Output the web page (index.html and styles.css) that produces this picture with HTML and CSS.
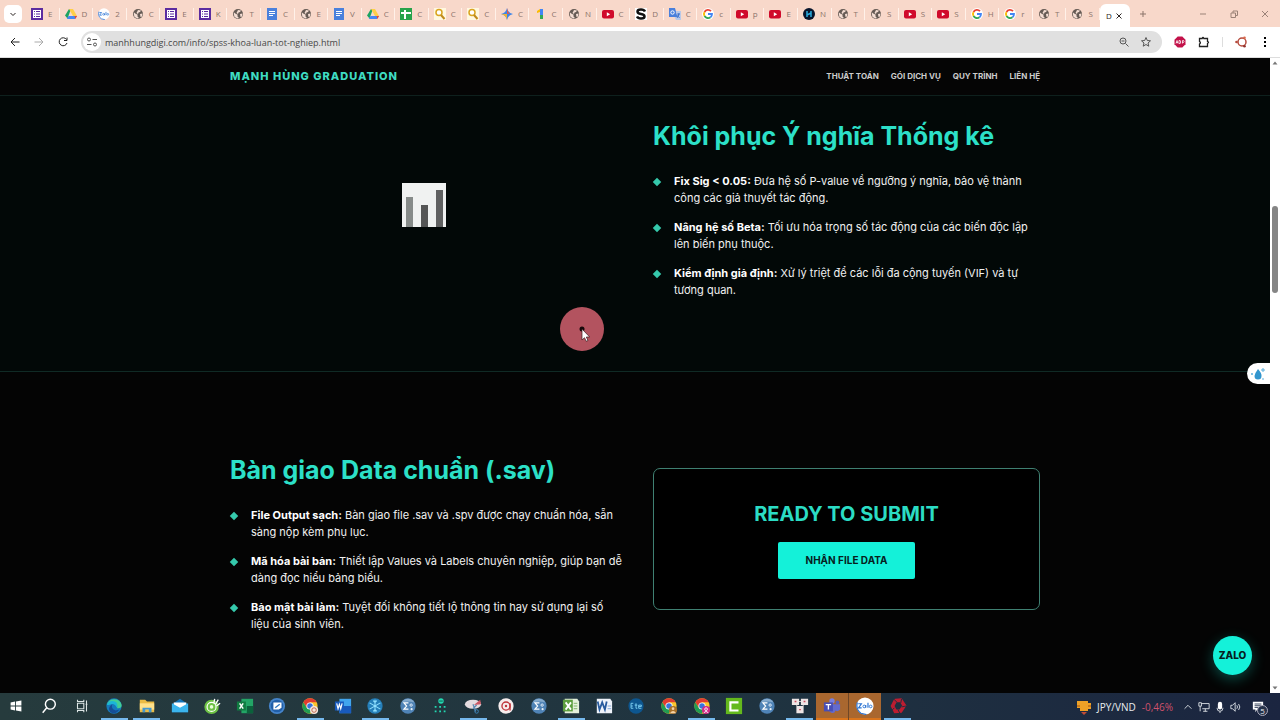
FILE: index.html
```html
<!DOCTYPE html>
<html lang="vi">
<head>
  <meta charset="UTF-8">
  <meta name="viewport" content="width=device-width, initial-scale=1">
  <title>Mạnh Hùng Graduation</title>
  <link rel="stylesheet" href="styles.css">
</head>
<body>

  <!-- Shared icons -->
  <svg class="sprite" aria-hidden="true">
    <symbol id="forms" viewBox="0 0 12 12"><path fill="#5b2ca0" d="M0 0h12v12H0z"/><path fill="#fff" d="M2 2h8v8H2z"/><path fill="#5b2ca0" d="M3 3h1v1H3zM5 3h4v1H5zM3 5.500h1v1H3zM5 5.500h4v1H5zM3 8h1v1H3zM5 8h4v1H5z"/></symbol>
    <symbol id="drive" viewBox="0 0 12 12"><path fill="#1da362" d="M4 1h2L2.500 10.500 0 7.500z"/><path fill="#ffcf48" d="M4 1h4l4 7H8z"/><path fill="#4688f4" d="M3.500 8H12l-2 3H1.800z"/><path fill="#ea4335" d="M9.500 8H12l-1.600 3z"/></symbol>
    <symbol id="globe" viewBox="0 0 12 12"><circle cx="6" cy="6" r="5" fill="#665b55"/><path fill="#f5ded4" d="M2 4.500 4 6l1.500.5v2L7 10l-1.500.5L2.500 9 1.800 6zM6 2l3 .5L8 4 6.500 4.500 6 6 4.500 5zM8 6l2.500-.5-.5 3L8.500 9z"/></symbol>
    <symbol id="docs" viewBox="0 0 12 12"><path fill="#4a80dc" d="M1 0h10v12H1z"/><path stroke="#fff" d="M3 3.500h6M3 5.500h6M3 7.500h4"/></symbol>
    <symbol id="sheets" viewBox="0 0 12 12"><path fill="#27a34b" d="M0 0h12v12H0z"/><path stroke="#fff" stroke-width="2" d="M1 5h10M5 2v9"/></symbol>
    <symbol id="search" viewBox="0 0 12 12"><path fill="#fff8e0" d="M0 0h12v12H0z"/><circle cx="5" cy="4.500" r="3" fill="#fff" stroke="#d9a520" stroke-width="1.500"/><path stroke="#c08b1c" stroke-width="2" d="m7 7 3.500 4"/></symbol>
    <symbol id="gemini" viewBox="0 0 12 12"><path fill="#3f86e8" d="M6 0Q7 5 12 6 7 7 6 12 5 7 0 6 5 5 6 0z"/><path fill="#ea5a49" d="M6 0Q7 5 9 5.500L6 6z"/><path fill="#efb336" d="M0 6q5 1 6 6V6z"/></symbol>
    <symbol id="one" viewBox="0 0 12 12"><path fill="#4285f4" d="M6 1h3v6H6z"/><path fill="#34a853" d="M6 7h3v4H6z"/><path fill="#fbbc04" d="m3 3 3-2v3L3 5z"/></symbol>
    <symbol id="tube" viewBox="0 0 12 12"><rect y="2" width="12" height="8.500" rx="2" fill="#d00a2b"/><path fill="#fff" d="M4.800 4.200v4L8.200 6.200z"/></symbol>
    <symbol id="esse" viewBox="0 0 12 12"><path fill="#fff" d="M0 0h12v12H0z"/><path fill="none" stroke="#111" stroke-width="2.500" d="M10 3.500Q9 1.500 6 1.500 2.500 1.500 2.500 3.500T6 6t3.500 2.500T6 10.500Q3 10.500 2 8.500"/></symbol>
    <symbol id="translate" viewBox="0 0 12 12"><path fill="#4a80dc" d="M0 0h6l2.500 9H0z"/><path fill="#b9c9e8" d="M7 3h5v9H7L5.500 9H8.500z"/><circle cx="3.500" cy="4.500" r="1.700" fill="none" stroke="#fff"/><path stroke="#4a80dc" d="M8 6h3M10 5v2l-2 3M8.500 7l2 3"/></symbol>
    <symbol id="google" viewBox="0 0 12 12"><circle cx="6" cy="6" r="6" fill="#fff"/><g fill="none" stroke-width="1.800"><path stroke="#ea4335" d="M2.500 4A4 4 0 0 1 9 3.200"/><path stroke="#fbbc04" d="M2.500 4a4 4 0 0 0 0 4"/><path stroke="#34a853" d="M2.500 8A4 4 0 0 0 8.500 9.200"/><path stroke="#4285f4" d="M8.500 9.200A4 4 0 0 0 10 6H6"/></g></symbol>
    <symbol id="hbadge" viewBox="0 0 12 12"><circle cx="6" cy="6" r="6" fill="#07142c"/><path fill="none" stroke="#2ba9dc" stroke-width="1.500" d="M4 3v6M8 3v6M4 7l4-2"/></symbol>
    <symbol id="zalo" viewBox="0 0 20 20"><circle cx="10" cy="10" r="9.500" fill="#fff"/><path fill="none" stroke="#2b74d4" stroke-width="1.300" d="M1.500 6q-2 8 4 12l6 1.500"/><path fill="none" stroke="#2b74d4" stroke-width="1.300" d="M2.500 7.500h3.500l-3.200 4.500h3.500M13.300 6.500V12M10.800 9V12"/><circle cx="9.200" cy="10.500" r="1.500" fill="none" stroke="#2b74d4"/><circle cx="16.300" cy="10.500" r="1.500" fill="none" stroke="#2b74d4"/></symbol>
    <symbol id="chrome" viewBox="0 0 20 20"><circle cx="10" cy="10" r="8.500" fill="#fbc52c"/><path fill="#e13c31" d="M2.600 5.700a8.500 8.500 0 0 1 14.800 0H10L6.500 12z"/><path fill="#219c52" d="M2.600 5.700a8.500 8.500 0 0 0 7 12.800l4-6.500H6.300z"/><circle cx="10" cy="10" r="4" fill="#fff"/><circle cx="10" cy="10" r="3.100" fill="#3974dc"/></symbol>
    <symbol id="sigma" viewBox="0 0 20 20"><circle cx="10" cy="10" r="8.500" fill="#4f83b6"/><path fill="#86abcd" d="M3 6a8 8 0 0 1 14 0q-7-2-14 0z"/><path fill="none" stroke="#fff" stroke-width="1.300" d="M10.500 6.500h-5l3 3.500-3 3.500h5"/><circle cx="13.500" cy="9" r="1.300" fill="none" stroke="#e8f2fa"/><circle cx="14" cy="13.500" r="1.200" fill="#e8f2fa"/></symbol>
  </svg>

  <!-- Browser tabs -->
  <div class="tab-strip">
    <button class="tab-menu" aria-label="Tabs"><svg viewBox="0 0 12 12"><path class="line" d="m3.500 5 2.500 2.500L8.500 5"/></svg></button>
    <div class="tabs">
      <a class="tab" href="#"><svg><use href="#forms"/></svg><span>E</span></a>
      <a class="tab" href="#"><svg><use href="#drive"/></svg><span>D</span></a>
      <a class="tab" href="#"><svg><use href="#zalo"/></svg><span>2</span></a>
      <a class="tab" href="#"><svg><use href="#globe"/></svg><span>C</span></a>
      <a class="tab" href="#"><svg><use href="#forms"/></svg><span>E</span></a>
      <a class="tab" href="#"><svg><use href="#forms"/></svg><span>K</span></a>
      <a class="tab" href="#"><svg><use href="#globe"/></svg><span>T</span></a>
      <a class="tab" href="#"><svg><use href="#docs"/></svg><span>C</span></a>
      <a class="tab" href="#"><svg><use href="#globe"/></svg><span>E</span></a>
      <a class="tab" href="#"><svg><use href="#docs"/></svg><span>V</span></a>
      <a class="tab" href="#"><svg><use href="#drive"/></svg><span>C</span></a>
      <a class="tab" href="#"><svg><use href="#sheets"/></svg><span>C</span></a>
      <a class="tab" href="#"><svg><use href="#search"/></svg><span>C</span></a>
      <a class="tab" href="#"><svg><use href="#search"/></svg><span>C</span></a>
      <a class="tab" href="#"><svg><use href="#gemini"/></svg><span>C</span></a>
      <a class="tab" href="#"><svg><use href="#one"/></svg><span>C</span></a>
      <a class="tab" href="#"><svg><use href="#globe"/></svg><span>N</span></a>
      <a class="tab" href="#"><svg><use href="#tube"/></svg><span>C</span></a>
      <a class="tab" href="#"><svg><use href="#esse"/></svg><span>D</span></a>
      <a class="tab" href="#"><svg><use href="#translate"/></svg><span>C</span></a>
      <a class="tab" href="#"><svg><use href="#google"/></svg><span>c</span></a>
      <a class="tab" href="#"><svg><use href="#tube"/></svg><span>p</span></a>
      <a class="tab" href="#"><svg><use href="#tube"/></svg><span>E</span></a>
      <a class="tab" href="#"><svg><use href="#hbadge"/></svg><span>N</span></a>
      <a class="tab" href="#"><svg><use href="#globe"/></svg><span>T</span></a>
      <a class="tab" href="#"><svg><use href="#globe"/></svg><span>S</span></a>
      <a class="tab" href="#"><svg><use href="#tube"/></svg><span>S</span></a>
      <a class="tab" href="#"><svg><use href="#tube"/></svg><span>S</span></a>
      <a class="tab" href="#"><svg><use href="#google"/></svg><span>H</span></a>
      <a class="tab" href="#"><svg><use href="#google"/></svg><span>r</span></a>
      <a class="tab" href="#"><svg><use href="#globe"/></svg><span>T</span></a>
      <a class="tab" href="#"><svg><use href="#globe"/></svg><span>S</span></a>
    </div>
    <div class="tab-active"><span>D</span><button aria-label="Close tab"><svg viewBox="0 0 12 12"><path class="line" d="m3.500 3.500 5 5m0-5-5 5"/></svg></button></div>
    <button class="tab-new" aria-label="New tab"><svg viewBox="0 0 12 12"><path class="line" d="M6 3v6M3 6h6"/></svg></button>
    <div class="window-buttons">
      <button aria-label="Minimize"><svg viewBox="0 0 12 12"><path class="line" d="M3 6h6"/></svg></button>
      <button aria-label="Restore"><svg viewBox="0 0 12 12"><path class="line" d="M3 5h4.500v4.500H3zM5 5V3h4.500v4.500h-2"/></svg></button>
      <button aria-label="Close"><svg viewBox="0 0 12 12"><path class="line" d="m3 3 6 6m0-6-6 6"/></svg></button>
    </div>
  </div>

  <!-- Address bar -->
  <div class="toolbar">
    <button aria-label="Back"><svg viewBox="0 0 12 12"><path class="line" d="M10.500 6h-8M6 2 2 6l4 4"/></svg></button>
    <button class="faded" aria-label="Forward"><svg viewBox="0 0 12 12"><path class="line" d="M1.500 6h8M6 2l4 4-4 4"/></svg></button>
    <button aria-label="Reload"><svg viewBox="0 0 12 12"><path class="line" d="M9.500 3.500A4 4 0 1 0 10 7M10 1.500v3H7"/></svg></button>
    <div class="address">
      <button class="site-info" aria-label="Site information"><svg viewBox="0 0 12 12"><path class="line" d="M6.500 3.500H11M1 8.500h4.500"/><circle class="line" cx="3" cy="3.500" r="1.500"/><circle class="line" cx="9" cy="8.500" r="1.500"/></svg></button>
      <input type="text" aria-label="Address" value="manhhungdigi.com/info/spss-khoa-luan-tot-nghiep.html">
      <button aria-label="Zoom"><svg viewBox="0 0 12 12"><circle class="line" cx="5" cy="5" r="3"/><path class="line" d="m7.500 7.500 3 3M3.500 5h3"/></svg></button>
      <button aria-label="Bookmark"><svg viewBox="0 0 12 12"><path class="line" d="m6 1.500 1.300 3 3.200.3L8 7l.8 3.200L6 8.500l-2.800 1.700L4 7 1.500 4.800l3.200-.3z"/></svg></button>
    </div>
    <div class="extensions">
      <button aria-label="ABP"><svg viewBox="0 0 12 12"><path fill="#c3124a" d="M3.700.5h4.600l3.200 3.200v4.600l-3.200 3.200H3.700L.5 8.300V3.700z"/><path fill="none" stroke="#fff" stroke-width=".8" d="M2 7.500 3 4.500l1 3M2.300 6.500h1.400M5 4.500v3h1q1 0 .5-1.500.5-1.500-.5-1.500zM8.500 7.500v-3h1q1 1 0 2h-1"/></svg></button>
      <button aria-label="Extensions"><svg viewBox="0 0 12 12"><path fill="none" stroke="#222" stroke-width="1.300" d="M1.500 2.500h2.700q.8-2 1.600 0h3.700v3q2 .7 0 2v3h-8V8q1.800-1.300 0-2.600z"/></svg></button>
      <span class="divider"></span>
      <button aria-label="Profile"><svg viewBox="0 0 12 12"><circle cx="7" cy="6" r="4" fill="none" stroke="#b54a3c" stroke-width="1.500"/><circle cx="1.500" cy="6" r="1.300" fill="#b54a3c"/><circle cx="9.500" cy="1.800" r="1.300" fill="#d9694c"/><circle cx="9.500" cy="10.200" r="1.300" fill="#8f302b"/></svg></button>
      <button aria-label="Menu"><svg viewBox="0 0 12 12"><path d="M5 1h2v2H5zM5 5h2v2H5zM5 9h2v2H5z"/></svg></button>
    </div>
  </div>

  <!-- Web page -->
  <div class="viewport">
    <div class="page">
      <header class="site-header">
        <div class="container header-row">
          <a class="logo" href="#">MẠNH HÙNG GRADUATION</a>
          <nav>
            <a href="#">THUẬT TOÁN</a>
            <a href="#">GÓI DỊCH VỤ</a>
            <a href="#">QUY TRÌNH</a>
            <a href="#">LIÊN HỆ</a>
          </nav>
        </div>
      </header>

      <section class="section section-tint">
        <div class="container columns">
          <div class="chart">
            <svg viewBox="0 0 44 44" role="img" aria-label="Biểu đồ"><path fill="#f0f2f1" d="M0 0h44v44H0z"/><path fill="#868b89" d="M4 14h7v30H4z"/><path fill="#555656" d="M19 22h7v22h-7z"/><path fill="#606161" d="M34 7h7v37h-7z"/></svg>
          </div>
          <div>
            <h2>Khôi phục Ý nghĩa Thống kê</h2>
            <ul class="features">
              <li><strong>Fix Sig &lt; 0.05:</strong> Đưa hệ số P-value về ngưỡng ý nghĩa, bảo vệ thành công các giả thuyết tác động.</li>
              <li><strong>Nâng hệ số Beta:</strong> Tối ưu hóa trọng số tác động của các biến độc lập lên&nbsp;biến phụ thuộc.</li>
              <li><strong>Kiểm định giả định:</strong> Xử lý triệt để các lỗi đa cộng tuyến (VIF) và tự tương quan.</li>
            </ul>
          </div>
        </div>
      </section>

      <section class="section">
        <div class="container columns">
          <div>
            <h2>Bàn giao Data chuẩn (.sav)</h2>
            <ul class="features">
              <li><strong>File Output sạch:</strong> Bàn giao file .sav và .spv được chạy chuẩn hóa, sẵn sàng nộp kèm phụ lục.</li>
              <li><strong>Mã hóa bài bản:</strong> Thiết lập Values và Labels chuyên nghiệp, giúp bạn dễ dàng đọc hiểu bảng biểu.</li>
              <li><strong>Bảo mật bài làm:</strong> Tuyệt đối không tiết lộ thông tin hay sử dụng lại số liệu&nbsp;của sinh viên.</li>
            </ul>
          </div>
          <div class="card">
            <h3>READY TO SUBMIT</h3>
            <button class="cta">NHẬN FILE DATA</button>
          </div>
        </div>
      </section>

      <button class="side-widget" aria-label="Widget"><svg viewBox="0 0 14 14"><path fill="#3296ce" d="M7 2q4 4.500 3.500 7a3.500 3.500 0 0 1-7 0Q4 6 7 2z"/><path stroke="#58aedb" d="M12 1v4M10 3h4M1 6v2M0 7h2M11 12h2"/></svg></button>
      <a class="zalo-button" href="#">ZALO</a>
      <div class="pointer">
        <svg viewBox="0 0 44 44"><circle cx="22" cy="22" r="22" fill="#b3535f"/><circle cx="22" cy="22" r="2.500" fill="#17080a"/><path fill="#fff" stroke="#3a1a1e" stroke-width=".7" d="M22 22v11l2.500-2.300 1.700 3.600 1.800-.8-1.700-3.500h3.400z"/></svg>
      </div>
    </div>
    <div class="scrollbar">
      <svg viewBox="0 0 10 10"><path d="m2.500 6.500 2.500-3 2.500 3z"/></svg>
      <div class="track"><div class="thumb"></div></div>
      <svg viewBox="0 0 10 10"><path d="m2.500 3.500 2.500 3 2.500-3z"/></svg>
    </div>
  </div>

  <!-- Taskbar -->
  <footer class="taskbar">
    <div class="apps">
      <button aria-label="Start"><svg viewBox="0 0 20 20"><path fill="#fff" d="m4 6 5-1v4.500H4zM10 5l6-1v5.500h-6zM4 10.500h5V15l-5-1zM10 10.500h6V16l-6-1z"/></svg></button>
      <button aria-label="Search"><svg viewBox="0 0 20 20"><circle cx="11.500" cy="8" r="5.500" fill="none" stroke="#fff" stroke-width="1.600"/><path stroke="#fff" stroke-width="1.600" d="M7.500 12 3 17.500"/></svg></button>
      <button aria-label="Task view"><svg viewBox="0 0 20 20"><path fill="none" stroke="#dce5e5" stroke-width="1.200" d="M5 7h7v6H5zM5 3v2h7V3M5 17v-2h7v2M15 4v12M14 8h2"/></svg></button>
      <button class="open" aria-label="Edge"><svg viewBox="0 0 20 20"><circle cx="10" cy="10" r="8.500" fill="#167abc"/><path fill="#42cf95" d="M2 9A8.500 8.500 0 0 1 18.500 9q0 4-5 3.500 1-6-5.500-6-4 0-6 2.500z"/><path fill="#1bb6d8" d="M2 9q3-6 9-4 4 2 2 7-2-5-6-4-3 1-5 1z"/><path fill="#164e96" d="M8 8q-2 5 4 7l4-1q-4 6-10 3-4-5 2-9z"/></svg></button>
      <button class="open" aria-label="Explorer"><svg viewBox="0 0 20 20"><path fill="#eabb45" d="M2 3h6l2 2h8v12H2z"/><path fill="#ffe18a" d="M2 7h16v7H2z"/><path fill="#4498cf" d="M5 12h10v5h-3v-3H8v3H5z"/></svg></button>
      <button aria-label="Mail"><svg viewBox="0 0 20 20"><path fill="#1574b8" d="M1 8 10 2l9 6v9H1z"/><path fill="#fff" d="M3 6h14v6l-7 3-7-3z"/><path fill="#3bb5ed" d="m1 7 9 5 9-5v10H1z"/></svg></button>
      <button aria-label="Coc Coc"><svg viewBox="0 0 20 20"><circle cx="9.500" cy="11" r="8" fill="#6dc244"/><circle cx="9.500" cy="11" r="5" fill="none" stroke="#fff" stroke-width="1.300"/><circle cx="9.500" cy="11" r="2" fill="#e9ffd9"/><path stroke="#fff" stroke-width="1.500" d="m12 7 1-5M14 8l3-5M15 10l4-3"/></svg></button>
      <button aria-label="Excel"><svg viewBox="0 0 20 20"><path fill="#23a566" d="M6 2h13v16H6z"/><path fill="#0b623b" d="M12 10h7v8h-7z"/><path fill="#107c41" d="M1 5h10v10H1z"/><path stroke="#fff" stroke-width="1.600" d="m4 7 4 6m0-6-4 6"/></svg></button>
      <button aria-label="Remote"><svg viewBox="0 0 20 20"><circle cx="10" cy="10" r="9" fill="#4584ca"/><circle cx="10" cy="10" r="7" fill="#215fa8"/><path fill="#fff" d="M6 6h9v6l-3 2H6z"/><path stroke="#3277be" stroke-width="1.500" d="m8 12 5-4"/></svg></button>
      <button class="open" aria-label="Chrome"><svg viewBox="0 0 20 20"><use href="#chrome"/><circle cx="14.500" cy="14.500" r="4.500" fill="#f5e7de"/><circle cx="14.500" cy="14.500" r="2.500" fill="none" stroke="#b95b43"/></svg></button>
      <button aria-label="Word"><svg viewBox="0 0 20 20"><path fill="#41a5ee" d="M6 2h13v16H6z"/><path fill="#185abd" d="M6 10h13v8H6zM1 5h10v10H1z"/><path fill="none" stroke="#fff" stroke-width="1.300" d="m3 7 1.500 6L6 8l1.500 5L9 7"/></svg></button>
      <button class="open" aria-label="Snow"><svg viewBox="0 0 20 20"><circle cx="10" cy="10" r="8.500" fill="#257fb9"/><path fill="none" stroke="#8fe0ff" stroke-width="1.200" d="M10 3v14M4 6.500l12 7M4 13.500l12-7M8 4l2 2 2-2M8 16l2-2 2 2"/></svg></button>
      <button aria-label="SPSS"><svg viewBox="0 0 20 20"><use href="#sigma"/></svg></button>
      <button aria-label="SmartPLS"><svg viewBox="0 0 20 20"><circle cx="10" cy="4.500" r="3" fill="#23d8b1"/><path stroke="#124f46" d="M8 4.500h4"/><path stroke="#23d8b1" stroke-width="2" stroke-dasharray="2 3" d="M3 11h15M3 16h15"/></svg></button>
      <button class="open" aria-label="Snipping tool"><svg viewBox="0 0 20 20"><ellipse cx="10" cy="8" rx="9" ry="5" fill="#e5dce0"/><path fill="#cb5763" d="m11 9 7-6 1 5z"/><path fill="none" stroke="#5e8bb3" stroke-width="1.500" d="m10 8 3 8m1-7-4 4"/><circle cx="14" cy="16" r="2" fill="none" stroke="#3b86bc"/></svg></button>
      <button aria-label="Q"><svg viewBox="0 0 20 20"><circle cx="10" cy="10" r="8.500" fill="#f6eded"/><circle cx="10" cy="10" r="4.500" fill="none" stroke="#bf343a" stroke-width="1.500"/><path stroke="#bf343a" stroke-width="1.500" d="M14.500 7v8"/><circle cx="10" cy="10" r="1.300" fill="#bf343a"/></svg></button>
      <button aria-label="SPSS"><svg viewBox="0 0 20 20"><use href="#sigma"/></svg></button>
      <button class="open" aria-label="Excel 2010"><svg viewBox="0 0 20 20"><path fill="#e5f1dc" d="M3 2h14l2 3v13H3z"/><path fill="#5d9f40" d="M1 3h11v13H1z"/><path stroke="#fff" stroke-width="2" d="m4 6 6 8m0-8-6 8"/><path stroke="#77af61" d="M13 7h4M13 10h4M13 13h4"/></svg></button>
      <button aria-label="Word 2010"><svg viewBox="0 0 20 20"><path fill="#eef3fa" d="M2 2h15l2 3v13H2z"/><path fill="none" stroke="#285b9e" stroke-width="2" d="m3 5 2 9 3-8 3 8 2-9"/><path stroke="#78a0d4" d="M14 10h4M14 13h4"/></svg></button>
      <button aria-label="Lte"><svg viewBox="0 0 20 20"><circle cx="10" cy="10" r="8.500" fill="#0d568f"/><path fill="none" stroke="#80d4f5" d="M7 7H4.500v5.500H7M4.500 10h2M8.500 9h3M10 7v5.500h1.500M13 10.500h3V9h-3v3.500h3"/></svg></button>
      <button aria-label="Chrome"><svg viewBox="0 0 20 20"><use href="#chrome"/><circle cx="14.500" cy="14.500" r="4.500" fill="#a9712a"/><circle cx="14.500" cy="13" r="1.500" fill="#f5d2a5"/><path fill="#f5d2a5" d="M11 18q3.500-5 7 0z"/></svg></button>
      <button class="open" aria-label="Chrome"><svg viewBox="0 0 20 20"><use href="#chrome"/><circle cx="14.500" cy="14.500" r="4.500" fill="#d42987"/><circle cx="14.500" cy="13.500" r="1.500" fill="none" stroke="#fff"/><path fill="none" stroke="#fff" d="M12 17.500q2.500-3 5 0"/></svg></button>
      <button aria-label="Camtasia"><svg viewBox="0 0 20 20"><path fill="#64b91d" d="M1 1h18v18H1z"/><path fill="none" stroke="#fff" stroke-width="2.400" d="M15 6H6v9h9"/></svg></button>
      <button aria-label="SPSS"><svg viewBox="0 0 20 20"><use href="#sigma"/></svg></button>
      <button class="open" aria-label="Amos"><svg viewBox="0 0 20 20"><path fill="#eee5e5" d="M1 2h8v7H1zM11 2h8v7h-8zM6 10h8v8H6z"/><path stroke="#eee5e5" d="M9 5h2M6 9l2 2M14 9l-2 2"/><path stroke="#cc4c60" stroke-width="1.500" d="M4 5h2M14 5h2M9 14h2"/></svg></button>
      <button class="alert" aria-label="Teams"><svg viewBox="0 0 20 20"><circle cx="10" cy="4.500" r="3" fill="#7a80df"/><circle cx="16" cy="6" r="2" fill="#5860bd"/><path fill="#646bce" d="M7 8h12v6q-3 3-5 1-2 5-7 1z"/><path fill="#484eb5" d="M1 6h10v10H1z"/><path stroke="#fff" stroke-width="1.500" d="M3 8.500h6M6 8.500V14"/></svg></button>
      <button class="alert" aria-label="Zalo"><svg viewBox="0 0 20 20"><use href="#zalo"/></svg></button>
      <button class="open" aria-label="Recorder"><svg viewBox="0 0 20 20"><path fill="none" stroke="#bd1d31" stroke-width="4" d="m7 4 6-.5 4 6-4 6-6 .5-3-6z"/><path stroke="#1c3040" d="m5 2 4 4M14 2l-1 5M19 10l-5 1M12 18l-2-4M3 15l3-3"/></svg></button>
    </div>
    <div class="tray">
      <svg class="rate-icon" viewBox="0 0 16 16"><path fill="#eea127" d="M1 2h11v2h3v6h-3v2H4V9H1z"/><path fill="#c9781c" d="M1 6h3v2H1zM12 6h3v2h-3z"/><path fill="#c34c35" d="m5 13 3 3 3-3z"/></svg>
      <span class="rate">JPY/VND</span>
      <span class="change">-0,46%</span>
      <button aria-label="Hidden icons"><svg viewBox="0 0 14 14"><path class="line" d="m3 9 4-4 4 4"/></svg></button>
      <button aria-label="Network"><svg viewBox="0 0 14 14"><path class="line" d="M4 3h9v6H5M1 2h3v4H1zM2.500 6v6M6 12h5M8.500 9v3"/></svg></button>
      <button aria-label="Microphone"><svg viewBox="0 0 14 14"><rect x="4.500" y="1" width="5" height="9" rx="2.500" fill="#fff"/><path class="line" d="M3.500 8q0 4 3.500 4t3.500-4M7 12v2"/></svg></button>
      <button aria-label="Volume"><svg viewBox="0 0 14 14"><path class="line" d="M1 5h2l3-3v10L3 9H1zM8 5q1.500 2 0 4M10 3.500q3 3.500 0 7"/></svg></button>
      <button class="notify" aria-label="Notifications"><svg viewBox="0 0 14 14"><path fill="#fff" d="M1 1h12v9H6l-2 3v-3H1z"/><path stroke="#22304a" d="M3 3.500h8M3 5.500h8M3 7.500h8"/></svg><span class="badge">5</span></button>
    </div>
  </footer>

</body>
</html>
```
FILE: styles.css
```css
* {
  box-sizing: border-box;
}

body {
  margin: 0;
  height: 100vh;
  display: flex;
  flex-direction: column;
  overflow: hidden;
  font-family: Inter, "Noto Sans", sans-serif;
  background: #000;
}

button {
  border: none;
  padding: 0;
  background: none;
  color: inherit;
  font-family: inherit;
  cursor: pointer;
}

a {
  color: inherit;
  text-decoration: none;
}

svg {
  display: block;
}

.sprite {
  position: absolute;
  width: 0;
  height: 0;
}

.line {
  fill: none;
  stroke: currentColor;
  stroke-width: 1;
}

/* Browser tabs */
.tab-strip {
  display: flex;
  flex: none;
  align-items: center;
  height: 27px;
  background: #f8d8ca;
  color: #2b2422;
  font: 8px "Open Sans", sans-serif;
}

.tab-menu {
  width: 18px;
  height: 18px;
  margin: 0 4px;
  border-radius: 5px;
  background: #fff;
}

.tab-menu svg {
  width: 12px;
  height: 12px;
  margin: auto;
}

.tabs {
  display: flex;
  flex: 1;
}

.tab {
  display: flex;
  flex: 1 1 0;
  gap: 5px;
  align-items: center;
  height: 12px;
  padding-left: 5px;
  border-right: 1px solid #fff1e9;
  color: #8b746b;
}

.tab svg {
  flex: none;
  width: 12px;
  height: 12px;
}

.tab-active {
  display: flex;
  align-items: center;
  align-self: flex-end;
  gap: 1px;
  width: 30px;
  height: 23px;
  padding-left: 6px;
  border-radius: 6px 6px 0 0;
  background: #fff;
}

.tab-active svg,
.tab-new svg,
.window-buttons svg {
  width: 12px;
  height: 12px;
}

.tab-new {
  margin-left: 7px;
  color: #8b746b;
}

.window-buttons {
  display: flex;
  gap: 19px;
  margin: 0 9px 0 48px;
  color: #9a8277;
}

/* Address bar */
.toolbar {
  display: flex;
  flex: none;
  align-items: center;
  gap: 12px;
  height: 31px;
  padding: 0 9px;
  border-bottom: 1px solid #ddd;
  background: #fff;
  color: #222;
}

.toolbar svg {
  width: 12px;
  height: 12px;
}

.faded {
  color: #aaa;
}

.address {
  display: flex;
  flex: 1;
  align-items: center;
  gap: 10px;
  height: 22px;
  padding: 0 10px 0 2px;
  border-radius: 11px;
  background: #e0e0e0;
  color: #555;
}

.site-info {
  padding: 3px;
  border-radius: 50%;
  background: #fff;
}

.address input {
  flex: 1;
  min-width: 0;
  margin-left: -6px;
  padding: 0;
  border: none;
  outline: none;
  background: none;
  color: #484848;
  font: 9px "Open Sans", sans-serif;
}

.extensions {
  display: flex;
  align-items: center;
  gap: 12px;
}

.divider {
  width: 1px;
  height: 10px;
  background: #ddd;
}

/* Web page */
.viewport {
  display: flex;
  flex: 1;
  min-height: 0;
}

.page {
  position: relative;
  flex: 1;
  overflow: hidden;
  background: #040404;
  color: #f1f1f1;
}

.container {
  max-width: 810px;
  margin: 0 auto;
}

.site-header {
  height: 38px;
  border-bottom: 1px solid #0e201d;
  background: #050505;
}

.header-row {
  display: flex;
  align-items: center;
  justify-content: space-between;
  height: 36px;
}

.logo {
  color: #3fdcc2;
  font-size: 11px;
  font-weight: 800;
  letter-spacing: 1px;
}

nav {
  display: flex;
  gap: 12px;
  color: #ccc;
  font-size: 8px;
  font-weight: 700;
}

.section {
  padding: 73px 0 72px;
}

.section-tint {
  padding-top: 15px;
  border-bottom: 1px solid #102a25;
  background: #020807;
}

.columns {
  display: grid;
  grid-template-columns: 1fr 1fr;
  align-items: center;
  gap: 36px;
}

.chart svg {
  width: 44px;
  height: 44px;
  margin: 0 auto;
}

h2 {
  margin: 0 0 12px;
  color: #2ce0c8;
  font-size: 25px;
  font-weight: 700;
  line-height: 50px;
}

.features {
  margin: 0 -8px 0 0;
  padding: 0;
  list-style: none;
}

.features li {
  position: relative;
  margin-bottom: 12px;
  padding-left: 21px;
  font-size: 11px;
  line-height: 17px;
}

.features li:last-child {
  margin-bottom: 0;
}

.features li::before {
  content: "";
  position: absolute;
  top: 6px;
  left: 1px;
  width: 6px;
  height: 6px;
  background: #35c9ac;
  transform: rotate(45deg);
}

.features strong {
  color: #fff;
  font-weight: 700;
}

.card {
  padding: 30px;
  border: 1px solid #3f8072;
  border-radius: 7px;
  background: #000;
  text-align: center;
}

h3 {
  margin: 0 0 13px;
  color: #2bdcc4;
  font-size: 20px;
  line-height: 30px;
}

.cta {
  display: block;
  margin: 0 auto;
  padding: 11px 28px;
  border-radius: 2px;
  background: #14f1d9;
  color: #06201d;
  font-size: 10px;
  font-weight: 700;
  line-height: 15px;
}

.side-widget {
  position: absolute;
  top: 305px;
  right: 0;
  width: 23px;
  height: 21px;
  padding-left: 4px;
  border-radius: 11px 0 0 11px;
  background: #fff;
}

.side-widget svg {
  width: 14px;
  height: 14px;
}

.zalo-button {
  position: absolute;
  right: 18px;
  bottom: 18px;
  width: 39px;
  height: 39px;
  border-radius: 50%;
  background: #14f1d9;
  box-shadow: 0 4px 14px rgba(20, 241, 217, 0.3);
  color: #06201d;
  font-size: 10px;
  font-weight: 800;
  line-height: 39px;
  text-align: center;
}

.pointer {
  position: absolute;
  top: 249px;
  left: 560px;
  width: 44px;
}

.scrollbar {
  display: flex;
  flex-direction: column;
  width: 10px;
  background: #fff;
  fill: #777;
}

.scrollbar svg {
  width: 10px;
  height: 10px;
}

.track {
  flex: 1;
  padding: 138px 2px 0;
}

.thumb {
  height: 87px;
  border-radius: 3px;
  background: #858585;
}

/* Taskbar */
.taskbar {
  display: flex;
  flex: none;
  height: 27px;
  background: linear-gradient(90deg, #263b3d, #1f3340 60%, #1b2540);
  color: #e8ecf0;
  font: 10px "Open Sans", sans-serif;
}

.apps {
  display: flex;
  flex: 1;
}

.apps button {
  display: flex;
  flex: 1 1 0;
  align-items: center;
  justify-content: center;
  border-bottom: 2px solid transparent;
}

.apps svg {
  width: 18px;
  height: 18px;
}

.apps .open {
  background: linear-gradient(#76b9ed, #76b9ed) center bottom / 27px 2px no-repeat border-box;
}

.apps .alert {
  border-bottom-color: #d9741c;
  background: #a9672f;
}

.apps .alert + .alert {
  box-shadow: -1px 0 #704726;
}

.tray {
  display: flex;
  align-items: center;
  width: 366px;
  padding-left: 162px;
}

.rate-icon {
  width: 16px;
  height: 16px;
}

.rate {
  margin-left: 5px;
}

.change {
  margin: 0 7px 0 6px;
  color: #d0526c;
}

.tray button {
  width: 16px;
}

.tray button svg {
  width: 12px;
  height: 12px;
  margin: auto;
}

.tray .notify {
  position: relative;
  margin-left: 6px;
}

.badge {
  position: absolute;
  left: 7px;
  top: 4px;
  width: 11px;
  height: 11px;
  border: 1px solid #aab;
  border-radius: 50%;
  background: #26324a;
  font-size: 8px;
  line-height: 9px;
}
```
